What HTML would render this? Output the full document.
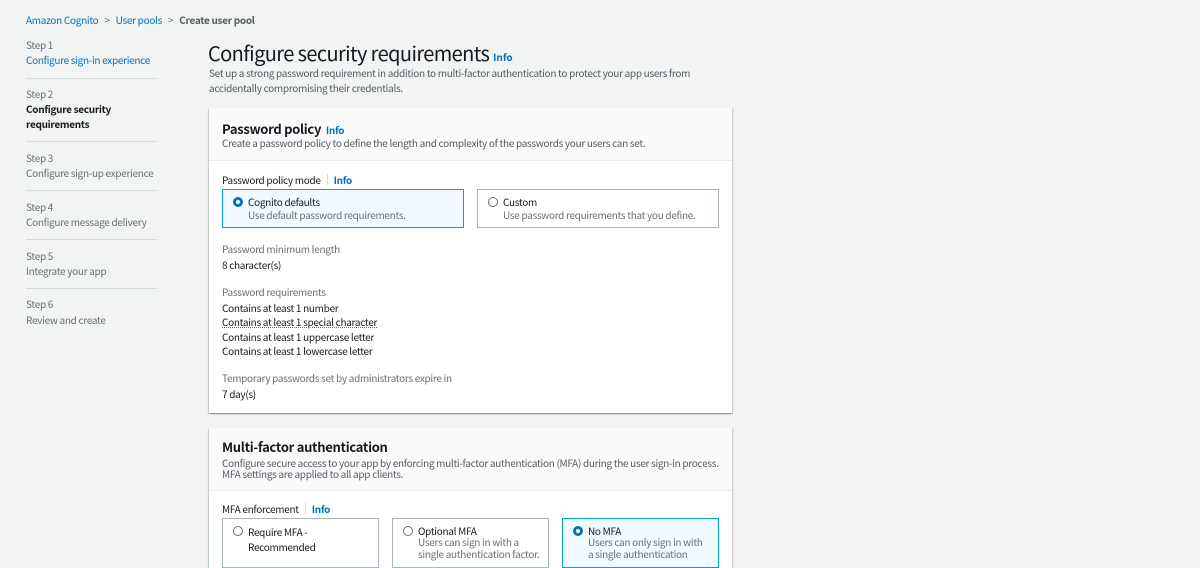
<!DOCTYPE html>
<html><head><meta charset="utf-8"><style>
*{box-sizing:border-box;margin:0;padding:0}
body{width:1200px;height:555px;overflow:hidden;background:#f2f3f3;font-family:"Noto Sans CJK SC","Liberation Sans",sans-serif;font-size:10px;letter-spacing:-0.3px;color:#16191f;position:relative}
.a{position:absolute;white-space:nowrap;line-height:14px}
.l{color:#0073bb}
.g{color:#687078}
.b{font-weight:bold}
.hr{position:absolute;left:26px;width:131px;height:1px;background:#d5dbdb}
.card{position:absolute;left:209px;width:523px;background:#fff;box-shadow:0 1px 1px rgba(0,28,36,.3),1px 1px 1px rgba(0,28,36,.15),-1px 1px 1px rgba(0,28,36,.15)}
.hd{position:absolute;left:0;top:0;width:100%;background:#fafafa;border-bottom:1px solid #eaeded}
.tile{position:absolute;border:1px solid #aab7b8;background:#fff;overflow:hidden}
.tile.s{border-color:#00a1c9;background:#f1faff}
.r{position:absolute;left:10px;top:7px;width:10px;height:10px;border-radius:50%;border:1px solid #687078;background:#fff}
.tile.s .r{border:3px solid #0073bb}
.sep{display:inline-block;width:1px;height:11px;background:#d5dbdb;margin:0 6px;vertical-align:-1px}
.dot{text-decoration:underline dotted #687078}
</style></head><body>
<div class="a" style="left:26px;top:13px"><span class="l">Amazon Cognito</span><span style="color:#687078;margin:0 6px">&gt;</span><span class="l">User pools</span><span style="color:#687078;margin:0 6px">&gt;</span><span class="b" style="color:#545b64">Create user pool</span></div>

<div class="a g" style="left:26px;top:38px">Step 1</div>
<div class="a l" style="left:26px;top:53px">Configure sign-in experience</div>
<div class="hr" style="top:78px"></div>
<div class="a g" style="left:26px;top:87px">Step 2</div>
<div class="a b" style="left:26px;top:102px">Configure security</div>
<div class="a b" style="left:26px;top:117px">requirements</div>
<div class="hr" style="top:141px"></div>
<div class="a g" style="left:26px;top:151px">Step 3</div>
<div class="a g" style="left:26px;top:166px">Configure sign-up experience</div>
<div class="hr" style="top:190px"></div>
<div class="a g" style="left:26px;top:200px">Step 4</div>
<div class="a g" style="left:26px;top:215px">Configure message delivery</div>
<div class="hr" style="top:239px"></div>
<div class="a g" style="left:26px;top:249px">Step 5</div>
<div class="a g" style="left:26px;top:264px">Integrate your app</div>
<div class="hr" style="top:288px"></div>
<div class="a g" style="left:26px;top:297px">Step 6</div>
<div class="a g" style="left:26px;top:313px">Review and create</div>

<div class="a" style="left:208px;top:39px;font-size:20px;letter-spacing:-0.6px;line-height:28px">Configure security requirements <span class="l b" style="font-size:10px;letter-spacing:0">Info</span></div>
<div class="a g" style="left:209px;top:66px;color:#545b64">Set up a strong password requirement in addition to multi-factor authentication to protect your app users from</div>
<div class="a g" style="left:209px;top:81px;color:#545b64">accidentally compromising their credentials.</div>

<div class="card" style="top:108px;height:305px">
 <div class="hd" style="height:53px"></div>
 <div class="a b" style="left:13px;top:12px;font-size:13px;line-height:18px">Password policy <span class="l" style="font-size:10px;margin-left:2px">Info</span></div>
 <div class="a g" style="left:13px;top:28px;color:#545b64">Create a password policy to define the length and complexity of the passwords your users can set.</div>
 <div class="a" style="left:13px;top:65px">Password policy mode<span class="sep"></span><span class="l b">Info</span></div>
 <div class="tile s" style="left:13px;top:81px;width:242px;height:39px"><div class="r"></div><div class="a" style="left:25px;top:5px">Cognito defaults</div><div class="a g" style="left:25px;top:18px">Use default password requirements.</div></div>
 <div class="tile" style="left:268px;top:81px;width:242px;height:39px"><div class="r"></div><div class="a" style="left:25px;top:5px">Custom</div><div class="a g" style="left:25px;top:18px">Use password requirements that you define.</div></div>
 <div class="a g" style="left:13px;top:134px">Password minimum length</div>
 <div class="a" style="left:13px;top:150px">8 character(s)</div>
 <div class="a g" style="left:13px;top:177px">Password requirements</div>
 <div class="a" style="left:13px;top:193px">Contains at least 1 number</div>
 <div class="a dot" style="left:13px;top:207px">Contains at least 1 special character</div>
 <div class="a" style="left:13px;top:222px">Contains at least 1 uppercase letter</div>
 <div class="a" style="left:13px;top:236px">Contains at least 1 lowercase letter</div>
 <div class="a g" style="left:13px;top:263px">Temporary passwords set by administrators expire in</div>
 <div class="a" style="left:13px;top:279px">7 day(s)</div>
</div>

<div class="card" style="top:428px;height:140px">
 <div class="hd" style="height:63px"></div>
 <div class="a b" style="left:13px;top:10px;font-size:13px;line-height:18px">Multi-factor authentication</div>
 <div class="a g" style="left:13px;top:29px;color:#545b64;line-height:11px">Configure secure access to your app by enforcing multi-factor authentication (MFA) during the user sign-in process.<br>MFA settings are applied to all app clients.</div>
 <div class="a" style="left:13px;top:74px">MFA enforcement<span class="sep"></span><span class="l b">Info</span></div>
 <div class="tile" style="left:13px;top:90px;width:157px;height:50px"><div class="r"></div><div class="a" style="left:25px;top:5px;line-height:15px">Require MFA -<br>Recommended</div></div>
 <div class="tile" style="left:183px;top:90px;width:157px;height:50px"><div class="r"></div><div class="a" style="left:25px;top:5px">Optional MFA</div><div class="a g" style="left:25px;top:17px;line-height:12px">Users can sign in with a<br>single authentication factor.</div></div>
 <div class="tile s" style="left:353px;top:90px;width:157px;height:50px"><div class="r"></div><div class="a" style="left:25px;top:5px">No MFA</div><div class="a g" style="left:25px;top:17px;line-height:12px">Users can only sign in with<br>a single authentication</div></div>
</div>
</body></html>
